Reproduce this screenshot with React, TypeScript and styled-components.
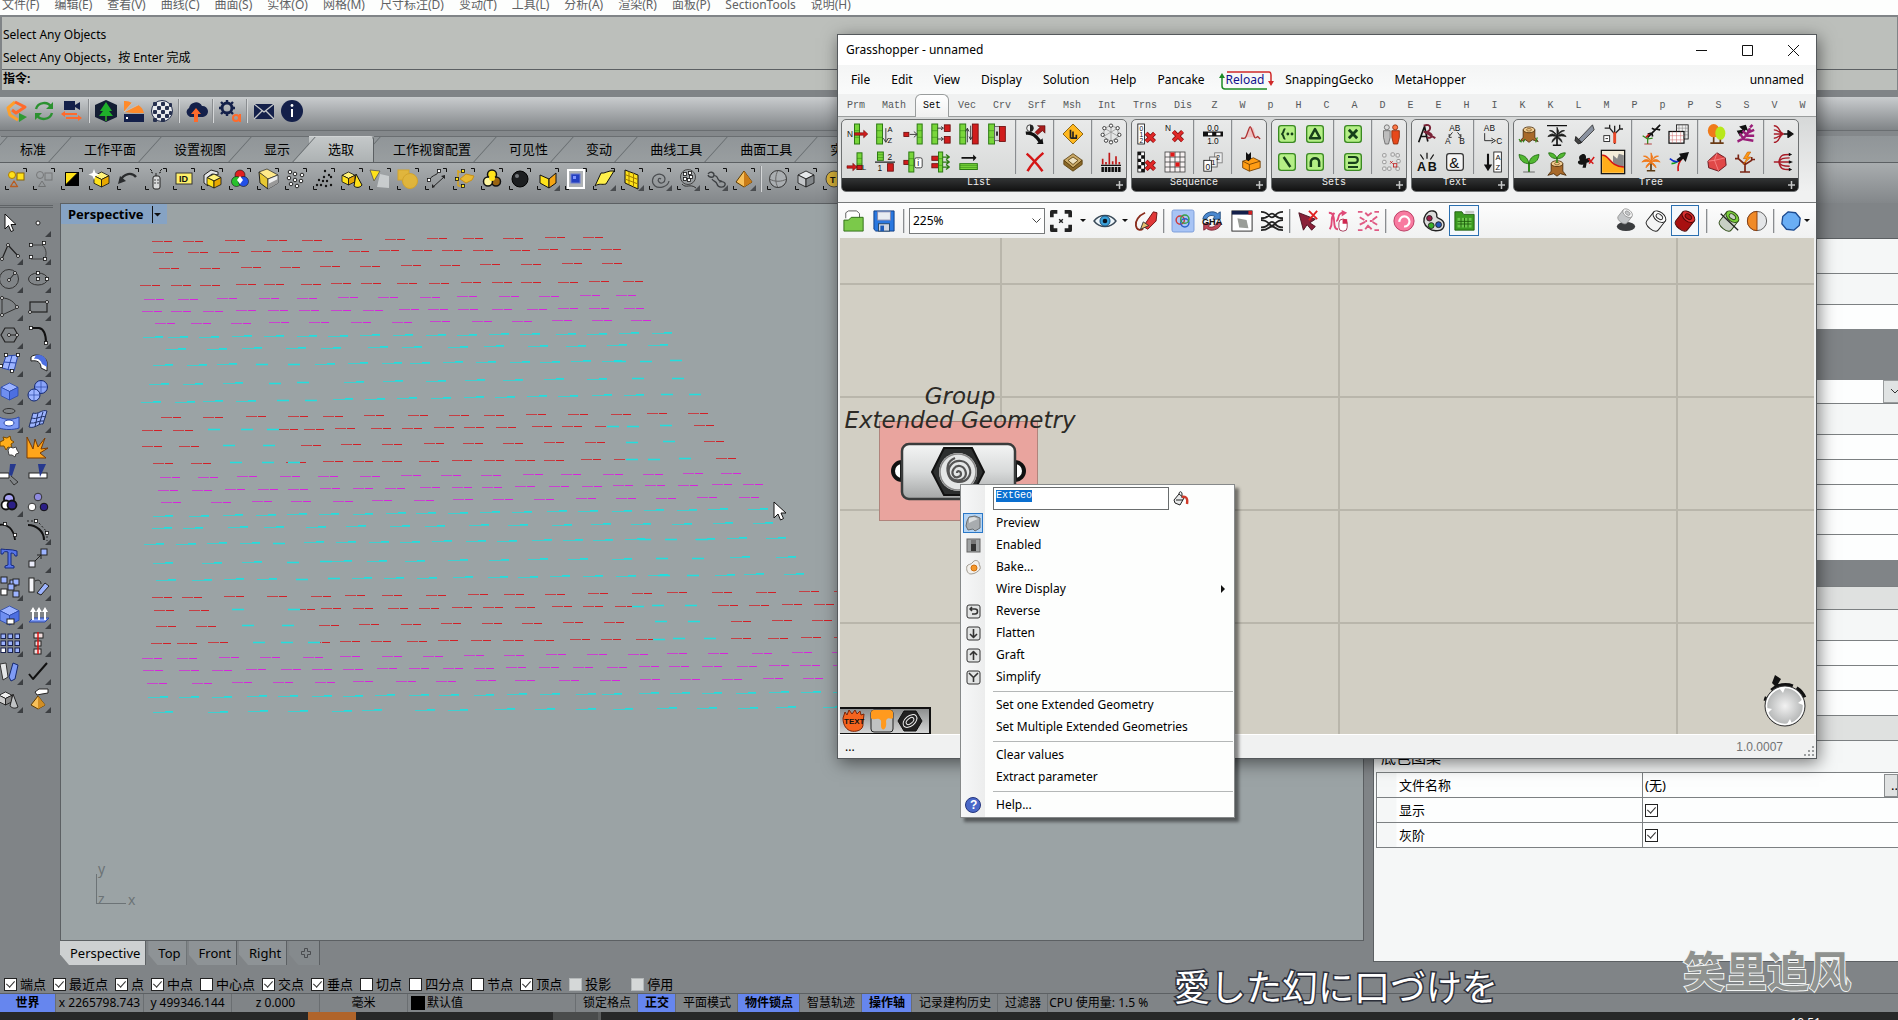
import React from 'react';
import styled, { createGlobalStyle, css } from 'styled-components';

const UI = '"Noto Sans", "Noto Sans CJK SC", sans-serif';
const MONO = '"Liberation Mono", "Noto Sans CJK SC", monospace';

const Global = createGlobalStyle`
  *, *::before, *::after { box-sizing: border-box; }
  body { margin: 0; font-family: ${UI}; font-size: 12px; color: #000; overflow: hidden; }
  button, input, select { font: inherit; color: inherit; margin: 0; padding: 0; border: 0; background: none; border-radius: 0; }
  svg { display: block; flex: none; overflow: visible; }
`;

/* ---------- drawing helpers ---------- */

type PProps = { d: string; f?: string; s?: string; w?: number; o?: number };
const P = ({ d, f = 'none', s = 'none', w = 1, o = 1 }: PProps) => (
  <path d={d} fill={f} stroke={s} strokeWidth={w} opacity={o} strokeLinejoin="round" />
);
type CProps = { x: number; y: number; r: number; f?: string; s?: string; w?: number };
const C = ({ x, y, r, f = 'none', s = 'none', w = 1 }: CProps) => (
  <circle cx={x} cy={y} r={r} fill={f} stroke={s} strokeWidth={w} />
);
type RProps = { x: number; y: number; w: number; h: number; f?: string; s?: string; r?: number; sw?: number };
const R = ({ x, y, w, h, f = 'none', s = 'none', r = 0, sw = 1 }: RProps) => (
  <rect x={x} y={y} width={w} height={h} rx={r} fill={f} stroke={s} strokeWidth={sw} />
);
type TProps = { x: number; y: number; z?: number; f?: string; b?: boolean; children: React.ReactNode };
const T = ({ x, y, z = 9, f = '#111', b = false, children }: TProps) => (
  <text x={x} y={y} fontSize={z} fill={f} fontWeight={b ? 700 : 400} fontFamily="Liberation Sans, Arial, sans-serif">{children}</text>
);
type BoxProps = { x: number; y: number; s: number; t: string; l: string; r: string; k?: string };
const Box = ({ x, y, s, t, l, r, k = '#111' }: BoxProps) => {
  const h = s / 2, q = s / 4;
  return (
    <g stroke={k} strokeWidth=".8" strokeLinejoin="round">
      <path d={`M${x} ${y + q}L${x + h} ${y}L${x + s} ${y + q}L${x + h} ${y + h}Z`} fill={t} />
      <path d={`M${x} ${y + q}L${x + h} ${y + h}V${y + s}L${x} ${y + s - q}Z`} fill={l} />
      <path d={`M${x + s} ${y + q}L${x + h} ${y + h}V${y + s}L${x + s} ${y + s - q}Z`} fill={r} />
    </g>
  );
};
const Dots = ({ pts, r, f, s = 'none' }: { pts: number[][]; r: number; f: string; s?: string }) => (
  <>{pts.map(([x, y]) => <C key={`${x}-${y}`} x={x} y={y} r={r} f={f} s={s} />)}</>
);
const Knots = ({ pts, f = '#fff', z = 3 }: { pts: number[][]; f?: string; z?: number }) => (
  <>{pts.map(([x, y]) => <R key={`${x}-${y}`} x={x - z / 2} y={y - z / 2} w={z} h={z} f={f} s="#111" sw={0.8} />)}</>
);
const Svg = ({ size, box = size, children }: { size: number; box?: number; children: React.ReactNode }) => (
  <svg width={size} height={size} viewBox={`0 0 ${box} ${box}`} aria-hidden="true">{children}</svg>
);

const Y = '#ffe21a';
const YD = '#e8a800';
const NAVY = '#14204a';
const OR = '#ff6a2b';

/* ---------- plugin bar icons (22 grid) ---------- */

const pluginIcons: (React.ReactNode | '|')[] = [
  <><P d="M10 2L3 8l2 7 8 5" s="#ffa02a" w={3} /><P d="M10 2l10 5-9 6-4-3" s={OR} w={3} /><P d="M14 13l8 4-8 5z" f="#2f9a35" /></>,
  <><P d="M3 9C5 2 15 1 18 7M19 13C17 20 7 21 4 15" s="#2b9130" w={2.4} /><P d="M20 2v7h-7zM2 20v-7h7z" f="#2b9130" /></>,
  <><R x={3} y={1} w={11} h={9} f={NAVY} /><P d="M14 5l5-3v8l-5-3z" f={NAVY} /><P d="M1 14h15M5 18h15" s={OR} w={2.2} /><P d="M0 14l4-3v6zM21 18l-4-3v6z" f={OR} /></>,
  '|',
  <><P d="M11 0L22 5V17L11 22L0 17V5Z" f="#131d33" /><P d="M11 2L17 11H14L18 16H4L8 11H5Z" f="#1fb02a" /><R x={10} y={16} w={2} h={5} f="#2b8a25" /></>,
  <><P d="M1 12V1A12 12 0 0 1 9 3L1 12L15 5A12 12 0 0 1 21 13H10Z" f="#ff8a2a" /><P d="M9 3L1 12M15 5L1 12" s="#c8c8c8" w={0.8} /><R x={1} y={14} w={20} h={8} f={NAVY} /><R x={3} y={17} w={2} h={2} f="#fff" /></>,
  <><C x={11} y={11} r={10.5} f="#e9ebee" s="#26304f" />{[2, 6, 10, 14, 18].map((yy, i) => [3, 11].map((xx) => <R key={`${yy}${xx}`} x={xx + (i % 2 ? 3 : -1)} y={yy} w={4} h={4} r={1} f="#26304f" />))}{[6, 14].map((yy) => <R key={yy} x={yy === 6 ? 18 : 18} y={yy - 3} w={3} h={4} r={1} f="#26304f" />)}</>,
  '|',
  <><P d="M5 17A5 5 0 0 1 4 8A7 7 0 0 1 17 6A5.500 5.500 0 0 1 18 17Z" f={NAVY} /><P d="M11 8l5 6h-3v8h-4v-8h-3z" f={OR} /></>,
  '|',
  <><C x={8} y={8} r={5} s={NAVY} w={3} /><P d="M8 0v3M8 13v3M0 8h3M13 8h3M2 2l3 3M11 11l3 3M14 2l-3 3M2 14l3-3" s={NAVY} w={2.4} /><C x={17} y={18} r={3} s={OR} w={2} /><P d="M21 14v8" s={OR} w={2} /></>,
  '|',
  <><R x={1} y={4} w={20} h={15} f={NAVY} /><P d="M1 4l10 8 10-8M1 19l8-8M21 19l-8-8" s="#c4c7c9" w={1.3} /></>,
  <><C x={11} y={11} r={11} f={NAVY} /><C x={11} y={5.5} r={1.4} f="#fff" /><P d="M11 9v8" s="#fff" w={2} /></>,
];

/* ---------- selection bar icons (22 grid) ---------- */

const selectIcons: (React.ReactNode | '|')[] = [
  <><C x={7} y={7} r={3.5} f={Y} s="#b07c00" /><R x={12} y={5} w={7} h={7} f={Y} s="#8a6400" /><P d="M9 13l3.500 5.500h-7z" s="#b85c20" w={1.3} /></>,
  <g opacity=".55"><C x={7} y={7} r={3.5} s="#555" /><R x={12} y={5} w={7} h={7} s="#555" /><P d="M9 13l3.500 5.500h-7z" s="#555" /></g>,
  <><R x={4} y={4} w={14} h={14} f="#000" /><P d="M4.500 17V4.500H17z" f={Y} s="#000" /></>,
  <><Box x={5} y={4} s={15} t="#fff27a" l={Y} r={YD} /><P d="M5 1l1.500 4 4 1.500-4 1.500-1.500 4-1.500-4-4-1.500 4-1.500z" f="#fff" /></>,
  <><P d="M3 13C7 5 15 4 19 9" s="#2a2c2e" w={2.4} /><P d="M1 16l2-8 6 5z" f="#2a2c2e" /></>,
  <><R x={8} y={8} w={7} h={13} r={2} f="#d8dadb" s="#222" /><P d="M11 8V5M7 3l-2-2M15 3l2-2M8 5l-2-1M14 5l2-1" s="#222" /><Dots pts={[[10, 12], [13, 12], [10, 15], [13, 15]]} r={0.8} f="#333" /></>,
  <><R x={3} y={5} w={16} h={11} f="#fff06a" s="#333" /><T x={6} y={14} z={9} b>ID</T></>,
  <><P d="M3 7l7-5 7 2v3l-6-1-4 3v9l-4-3z" f="#e4e6e7" s="#222" /><Box x={6} y={6} s={14} t="#fff27a" l={Y} r={YD} /></>,
  <><C x={11} y={7} r={5} f="#e21f1f" s="#111" w={0.6} /><C x={7.5} y={13.5} r={5} f="#28c12c" s="#111" w={0.6} /><C x={14.5} y={13.5} r={5} f="#2350e8" s="#111" w={0.6} /><P d="M11 8l3 4-3 4-3-4z" f="#fff" /></>,
  <><P d="M2 4l9 6v11l-8-6z" f="#e8c832" s="#222" /><P d="M2 4l8-3 11 6-10 4z" f="#ffe98a" s="#222" w={0.7} /><P d="M11 11l10-4v8l-10 6z" f="#eee" s="#222" w={0.7} /><P d="M11 16l10-5v4l-10 6z" f="#999" /></>,
  <Dots pts={[[5, 4], [10, 6], [17, 7], [4, 10], [10, 12], [6, 16], [12, 18], [16, 13]]} r={1.8} f="#fff" s="#222" />,
  <Dots pts={[[12, 3], [16, 7], [11, 9], [18, 9], [6, 12], [10, 13], [14, 13], [4, 17], [8, 17], [13, 18], [18, 17]]} r={1.2} f="#111" />,
  <><Box x={1} y={4} s={13} t="#fff27a" l={Y} r={YD} /><P d="M15 6l6 11c-2 3-6 3-8 1z" f={Y} s="#111" /></>,
  <><P d="M11 6l9 2v12l-12-1z" f="#d5d8da" o={0.8} /><P d="M1 2l10 1-6 10z" f={Y} s="#555" w={0.8} /></>,
  <g fill="#e8b832" stroke="#d9a520" opacity=".9"><rect x="1" y="2" width="11" height="10" /><circle cx="13" cy="13" r="7.500" /></g>,
  <><P d="M4 12C8 6 12 8 14 3M8 19l11-10" s="#222" /><P d="M20 7v4l-4-3zM7 20v-4l3 3z" f="#222" /><Knots pts={[[4, 12], [14, 3]]} /></>,
  <><P d="M5 2v16M5 4h7M5 18h5" s="#d9a520" w={1.5} /><Knots pts={[[10, 3], [10, 18], [4, 11]]} f={Y} /><P d="M7 11l6-5 8 2-2 4-6 3z" f="#e8b832" s="#c8901a" /></>,
  <><C x={11} y={6.5} r={4.5} f={Y} s="#111" w={1.5} /><C x={15} y={13.5} r={4.5} f="#9a6412" s="#111" w={1.5} /><C x={7} y={13.5} r={4.5} f="#fff7a0" s="#111" w={1.5} /><C x={11} y={10} r={3} f={Y} /></>,
  <><C x={11} y={11} r={8} f="#1c1e20" s="#000" /><C x={8} y={8} r={2} f="#74787b" /></>,
  <><P d="M3 7l9 4v9l-9-5z" f={Y} s="#111" /><P d="M12 11l7-6v10l-7 5z" f="#f5a514" s="#111" /></>,
  <><R x={3} y={2} w={16} h={18} f="#aeb2b5" s="#fff" sw={2} /><R x={6} y={6} w={9} h={9} f="#2440c0" s="#6a7ad0" /><R x={8} y={8} w={3} h={3} f="#7e94ff" /></>,
  <P d="M8 5c4 1 7-3 13-2l-8 13c-4 1-7-1-11 2z" f="#fff04a" s="#111" />,
  <><P d="M4 2l13 5v14l-13-6z" f={Y} s="#111" /><P d="M8 3.500v13M12.500 5v14M4 6.500l13 5M4 11l13 5" s="#a07c00" /></>,
  <P d="M12 11c-2-2-4 1-2 3s6 1 6-3-5-6-9-4-5 8-1 11 13 1 14-5" s="#4a4d50" w={1.2} />,
  <><C x={11} y={9} r={7.5} s="#444" /><Knots pts={[[8, 6], [13, 5], [14, 9], [8, 11], [12, 12]]} /><P d="M5 16c4 5 8-1 14 4" s="#333" /></>,
  <P d="M3 6c2-3 6-2 6 1s-5 3-6 0M8 8c2-1 4 0 5 3s4 1 4 3M7 11c2 3 4 2 5 5 1 4 7 4 8 1s-3-4-6-3" s="#3c3f42" w={1.3} />,
  <><P d="M11 3l8 11-8 5-8-5z" f="#f7c05a" s="#5c3a00" /><P d="M11 3v16l8-5z" f="#c97b17" /></>,
  '|',
  <><C x={11} y={11} r={8.5} f="#aaaeb1" s="#333" /><P d="M2.500 11c5 3 12 3 17 0M11 2.500c-3 5-3 12 0 17" s="#666" /></>,
  <Box x={3} y={3} s={16} t="#e4e7e9" l="#c2c5c8" r="#83878a" />,
  <><C x={11} y={11} r={8} f="#d8b23a" s="#444" /><T x={7} y={15} b>T</T></>,
];
const flyouts = new Set([19, 21, 22, 23, 24, 25, 26]);

/* ---------- side bar icons (22 grid) ---------- */

const B1 = '#9db4ff', B2 = '#4d6fe0', B3 = '#2a47a8';
const sideIcons: React.ReactNode[] = [
  <P d="M6 2v15l3.500-3.500 2.500 6 2.500-1-2.500-6h5z" f="#fff" s="#111" />,
  <C x={11} y={11} r={2} f="#fff" s="#222" />,
  <><P d="M3 19L9 5L19 16" s="#222" w={1.2} /><Dots pts={[[3, 19], [9, 5], [19, 16]]} r={1.5} f="#fff" s="#222" /></>,
  <><P d="M3 5h12c5 3 5 12 2 14H4" s="#444" /><Knots pts={[[4, 5], [17, 3], [4, 17], [18, 19]]} /></>,
  <><C x={10} y={11} r={9.5} s="#333" /><P d="M10 12l6-7" s="#222" /><Dots pts={[[10, 12], [16, 5]]} r={1.5} f="#fff" s="#222" /></>,
  <><ellipse cx="11" cy="11" rx="9.500" ry="6" fill="none" stroke="#333" /><Knots pts={[[11, 5], [11, 11], [20, 11]]} /></>,
  <><P d="M3 2v17L18 12C16 6 10 2 3 2" s="#333" /><Dots pts={[[3, 2], [3, 19], [18, 11]]} r={1.5} f="#fff" s="#222" /></>,
  <><R x={3} y={6} w={17} h={10} s="#222" sw={1.2} /><Dots pts={[[3, 16], [20, 6]]} r={1.5} f="#fff" s="#222" /></>,
  <><P d="M6 4h9l4 7-4 7H6l-4-7z" s="#222" w={1.2} /><P d="M10 11h8" s="#222" /><Dots pts={[[10, 11], [18, 11]]} r={1.5} f="#fff" s="#222" /></>,
  <><P d="M4 4h8c5 1 7 6 7 15" s="#111" w={2} /><Knots pts={[[4, 4], [19, 19]]} /></>,
  <><P d="M7 4l12-1-4 16-12-3z" f={B1} s={B3} /><P d="M13 3.500l-4 14M5 10l12 1" s={B3} /><Knots pts={[[7, 3], [19, 3], [2, 14], [13, 19]]} /></>,
  <><P d="M4 5c4-4 14-2 16 5v9l-6-3c0-6-4-8-10-7z" f="#fff" s="#222" /><P d="M9 3c6-1 10 2 11 8v4l-5-3c-1-4-4-6-8-5z" f={B2} /></>,
  <Box x={2} y={3} s={17} t={B1} l="#6f8ff0" r={B2} k={B3} />,
  <><C x={14} y={7} r={6.5} f="#8aa4fa" s="#14286e" /><C x={7} y={15} r={6} f={B1} s="#14286e" /><P d="M14 1v13M7 9v12M1 15h12M8 7h12" s={B3} w={0.7} /></>,
  <><ellipse cx="10" cy="3" rx="6" ry="2.500" fill="none" stroke="#333" /><P d="M0 9c6 3 14 3 20 0v11c-6 2-14 2-20 0z" f="#7f9bf5" s={B3} /><ellipse cx="10" cy="15" rx="5" ry="3" fill="#fff" stroke={B3} /></>,
  <><P d="M6 5c5 2 9-4 14-2l-4 13c-4-1-8 5-14 3z" f={B1} s="#1e2f66" /><P d="M11 5l-3 14M16 4l-4 13M5 10c5 2 9-3 14-1M3 15c5 1 9-3 14-2" s="#1e2f66" /></>,
  <><P d="M1 6l4-2-1-3 4 1 3-2 1 4 3 2-3 2 1 4-4-1-2 3-2-4-4 0z" f="#ffae1a" s="#7a4a00" /><P d="M9 14l2-3 3 1 3-1 1 3 2 3-3 1-1 3-3-2-3 0z" f="#fff" s="#444" /></>,
  <P d="M0 1l6 12 2-10 3 8 7-9-4 11 7-1-8 5 6 5H0z" f="#ffa51a" s="#7a3a00" />,
  <><P d="M0 9h10v5H0z" f="#fff" s="#222" /><P d="M11 0h6l-4 12-3-1z" f="#26398e" /><P d="M12 12l7 6-4 3-4-5" s="#333" /></>,
  <><R x={2} y={9} w={18} h={5} f="#fff" s="#222" /><P d="M11 0h8l-6 13z" f="#26398e" /></>,
  <><C x={10} y={7} r={5} f="#a9a4f5" s="#111" w={1.8} /><C x={7} y={13} r={4.5} f="#fff" s="#111" w={1.8} /><C x={13} y={13} r={4.5} f="#2b1f86" s="#111" w={1.8} /></>,
  <><C x={11} y={5} r={3.8} f="#8f8be0" s="#333" /><C x={5} y={15} r={3.8} f="#fff" s="#333" /><C x={17} y={15} r={3.8} f="#2b1f86" s="#111" /></>,
  <><P d="M0 5c8-2 15 4 16 15" s="#111" w={1.8} /><Knots pts={[[6, 4], [16, 15]]} /></>,
  <><P d="M1 5c8 0 16 6 16 15" s="#111" w={2} /><path d="M0 1h8M12 3l8 9v9" stroke="#222" strokeDasharray="2 2" fill="none" /><Knots pts={[[9, 1], [20, 13]]} /></>,
  <P d="M2 1c6 1 10 0 16 2l0 5-2 0c0-2-2-3-4-3v12l3 1v2H6v-2l3-1V4c-3-1-5 0-5 2H2z" f="#5674e8" s="#152a80" />,
  <><P d="M7 14l7-7M14 7h-4M14 7v4" s="#222" /><R x={2} y={13} w={6} h={6} f="#e8eaf8" s="#222" /><R x={14} y={1} w={6} h={6} f={B1} s="#222" /></>,
  <>{[[2, 1], [11, 4], [14, 3], [2, 13], [14, 15], [9, 8]].map(([x, y], i) => <R key={i} x={x} y={y} w={6} h={6} f={i === 3 ? '#fff' : B1} s="#222" />)}</>,
  <><R x={2} y={2} w={5} h={14} f="#f4f5f8" s="#222" /><P d="M8 5c4-2 6 0 6 3" s="#222" /><P d="M10 17l8-10 4 3-8 9z" f={B1} s="#222" /></>,
  <><Box x={1} y={2} s={19} t={B1} l="#6f8ff0" r={B2} k={B3} /><R x={8} y={15} w={7} h={5} f="#fff" s="#222" /></>,
  <><P d="M2 18l4-4h16l-4 4z" f="#7f9bf5" s={B3} /><P d="M6 16V7M12 16V7M18 16V7" s="#fff" w={2} /><P d="M3 8l3-5 3 5zM9 8l3-5 3 5zM15 8l3-5 3 5z" f="#fff" /></>,
  <>{[2, 9, 16].map((x) => [2, 9, 16].map((y) => <R key={`${x}${y}`} x={x} y={y} w={4.5} h={4.5} f={y === 16 && x === 2 ? '#fff' : B1} s="#1a2350" />))}</>,
  <><R x={7} y={1} w={9} h={5} f="#f2dede" s="#222" /><R x={8} y={9} w={6} h={5} f="#f2dede" s="#222" /><R x={7} y={17} w={7} h={5} f="#f2dede" s="#222" /><P d="M11 0v22" s="#d11" w={1.5} /></>,
  <><P d="M1 4l6-1 2 14-5 3z" f="#e4e6e7" s="#333" /><P d="M10 17L14 3l5 2-3 14-4 2z" f="#7f9bf5" s="#14286e" /></>,
  <P d="M2 14l4 5L20 3" s="#111" w={2} />,
  <><Box x={0} y={4} s={13} t="#eee" l="#ccc" r="#888" /><P d="M14 6l5 13c-3 2-6 1-8-1z" f="#bfc2c4" s="#222" /></>,
  <><P d="M11 8l7 9-7 4-7-4z" f="#f7c05a" s="#5c3a00" /><P d="M11 8v13l7-4z" f="#d18e24" /><P d="M8 4l4-3h9v4l-6 1-5 1z" f="#fff" s="#222" /></>,
];
const noFlyout = new Set([0, 16, 17, 18, 19, 21, 22, 24]);

/* ---------- ribbon icons (24 grid) ---------- */

const GreenBar = ({ x, y = 0, w = 6, h = 24 }: { x: number; y?: number; w?: number; h?: number }) => (
  <><R x={x} y={y} w={w} h={h} f="#79d63a" s="#2c7a12" sw={1.2} /><P d={`M${x} ${y + h / 3}h${w}M${x} ${y + (2 * h) / 3}h${w}`} s="#2c7a12" w={0.6} /></>
);
const RED = '#d01c1c';
const Arrow = ({ x, y, l = 10, f = RED, s = '#6b0c0c' }: { x: number; y: number; l?: number; f?: string; s?: string }) => (
  <P d={`M${x} ${y - 1.5}h${l - 4}v-3l5 4.500-5 4.500v-3h-${l - 4}z`} f={f} s={s} w={0.7} />
);
const RedX = ({ x, y, z }: { x: number; y: number; z: number }) => (
  <><P d={`M${x} ${y}l${z} ${z}M${x + z} ${y}l-${z} ${z}`} s="#7a0c0c" w={5} /><P d={`M${x} ${y}l${z} ${z}M${x + z} ${y}l-${z} ${z}`} s="#e02828" w={3.4} /></>
);
const SetTile = ({ children }: { children: React.ReactNode }) => (
  <><R x={2} y={2} w={20} h={20} r={3} f="#b5ef86" s="#3b8a22" sw={1.6} />{children}</>
);
const Palm = ({ c, t = '#5a3a14' }: { c: string; t?: string }) => (
  <><P d="M12 12v10M7 22.500h10" s={t} w={2} /><P d="M12 12C8 8 5 8 1 12c4-1 7-1 11 0zM12 12c4-4 7-4 11 0-4-1-7-1-11 0zM12 11C9 6 6 4 3 5c4 1 6 3 9 6zM12 11c3-5 6-7 9-6-4 1-6 3-9 6zM12 11V1l2 5zM12 12c-3 1-6 4-6 7l6-6zM12 12c3 1 6 4 6 7l-6-6z" f={c} s={c} w={1} /></>
);
const Stump = ({ y = 8 }: { y?: number }) => (
  <><P d={`M5 ${y}v9l-4 5 7-2 4 3 4-3 7 2-4-5v-9z`} f="#a8692a" s="#4a2a08" /><ellipse cx="12" cy={y} rx="7" ry="3.500" fill="#f1cf94" stroke="#4a2a08" /><ellipse cx="12" cy={y} rx="3" ry="1.500" fill="none" stroke="#8a5a20" /></>
);

type Section = [React.ReactNode, React.ReactNode][];
const ribbon: { name: string; sections: Section[] }[] = [
  {
    name: 'List',
    sections: [
      [
        [<><GreenBar x={9} /><T x={0} y={16} z={10}>N</T><Arrow x={9} y={12} l={15} /></>, <><GreenBar x={12} h={20} y={1} /><Arrow x={0} y={18} l={11} /><R x={12} y={16} w={6} h={5} f={RED} s="#6b0c0c" /><T x={18} y={22}>L</T></>],
        [<><GreenBar x={2} w={7} /><P d="M13 5v16M10 17l3 5 3-5" s="#222" /><T x={15} y={9}>A</T><T x={15} y={23}>Z</T></>, <><GreenBar x={3} w={7} h={10} /><P d="M0 12h24" s="#222" w={1.5} /><R x={15} y={14} w={7} h={9} f={RED} s="#6b0c0c" /><T x={15} y={9} z={10}>2</T><T x={3} y={23} z={10}>1</T></>],
        [<><GreenBar x={17} /><R x={1} y={10} w={6} h={5} f={RED} s="#6b0c0c" /><P d="M8 12.500h8M13 9l4 3.500-4 3.500" s="#222" /></>, <><R x={1} y={10} w={6} h={5} f={RED} s="#6b0c0c" /><GreenBar x={7} /><R x={14} y={7} w={9} h={12} r={2} f="#fff" s="#222" /><T x={17} y={17} z={10}>i</T></>],
        [<><GreenBar x={1} w={7} /><R x={16} y={1} w={7} h={8} f={RED} s="#6b0c0c" /><R x={16} y={15} w={7} h={8} f={RED} s="#6b0c0c" /><P d="M8 5h6M8 18h6M12 3l3 2-3 2M12 16l3 2-3 2" s="#222" /></>, <><R x={1} y={5} w={8} h={5} f={RED} s="#6b0c0c" /><R x={1} y={14} w={8} h={5} f={RED} s="#6b0c0c" /><GreenBar x={9} w={5} /><P d="M14 6h7M14 12h7M14 18h7M18 3l4 3-4 3M18 9l4 3-4 3M18 15l4 3-4 3" s="#2c7a12" w={1.5} /></>],
        [<><GreenBar x={1} w={7} /><R x={16} y={0} w={7} h={24} f={RED} s="#6b0c0c" /><P d="M10 22V6M14 2v16M8 9l2-4 2 4M12 15l2 4 2-4" s="#222" /></>, <><P d="M3 6h14v-3l4 4-4 4v-3H3z" f="#111" /><GreenBar x={1} y={14} w={21} h={7} /></>],
        [<><GreenBar x={2} w={7} /><R x={9} y={3} w={6} h={17} f="#d7d7d7" s="#555" /><R x={15} y={3} w={7} h={18} f={RED} s="#6b0c0c" /><P d="M12 9v5" s="#111" w={2} /></>, null],
      ],
      [[<><C x={6} y={5} r={4} f="#eee" s="#222" /><P d="M6 1a4 4 0 0 1 0 8z" f="#222" /><P d="M1 11c8-1 12 3 17 10" s="#111" w={4} /><P d="M22 24h-8l7-7z" f="#111" /><P d="M12 10l6-6-3-2h9v9l-3-3-6 5z" f="#a81c1c" s="#4a0808" w={0.7} /></>, <P d="M2 2C9 8 15 15 21 23M22 1C15 7 8 14 3 23" s="#d41616" w={3} />]],
      [[<><P d="M12 0l12 12-12 12L0 12z" f="#ffb81f" s="#7a5200" /><P d="M9 7v10M9 17h7v-4M12 9v8" s="#222" w={2} /></>, <><P d="M1 10l11-8 11 8-11 9z" f="#c9a968" s="#5a3f0c" /><P d="M1 10v5l11 8 11-8v-5l-11 9z" f="#8a6828" s="#5a3f0c" /><P d="M6 10l6-4 6 4-6 5z" f="#ece0bf" s="#5a3f0c" /></>]],
      [[<><P d="M12 2L4 5L3 15L12 21L21 15L20 5Z M12 2V21M4 5L21 15M20 5L3 15" s="#999" /><Dots pts={[[12, 2], [4, 5], [20, 5], [2, 13], [22, 13], [6, 20], [18, 20], [12, 22]]} r={2} f="#fff" s="#222" /></>, <><P d="M2 15V8M6 15v-3M10 15V1M14 15v-4M18 15V5M22 15v-3" s="#c01818" w={2} /><P d="M0 16h24" s="#111" w={1.5} /><P d="M2 18v6M6 18v6M10 18v6M14 18v6M18 18v6M22 18v6" s="#111" w={3} /></>]],
    ],
  },
  {
    name: 'Sequence',
    sections: [
      [
        [<><R x={1} y={0} w={8} h={24} f="#fff" s="#111" /><T x={3} y={8} z={8}>0</T><T x={3} y={16} z={8}>1</T><T x={3} y={23} z={8}>2</T><RedX x={11} y={11} z={10} /></>, <><R x={1} y={0} w={8} h={24} f="#fff" s="#111" /><P d="M1 0h4v4h-4zM5 4h4v4h-4zM1 8h4v4h-4zM5 12h4v4h-4zM1 16h4v4h-4zM5 20h4v4h-4z" f="#111" /><RedX x={11} y={11} z={10} /></>],
        [<><T x={0} y={8} z={10}>N</T><RedX x={10} y={9} z={11} /></>, <><R x={0} y={0} w={24} h={24} f="#f7f2f2" s="#444" /><P d="M6 0v24M12 0v24M18 0v24M0 6h24M0 12h24M0 18h24" s="#444" /><R x={6.5} y={0.5} w={5} h={5} f="#e01818" /><R x={12.5} y={12.5} w={5} h={5} f="#e01818" /></>],
      ],
      [[<><T x={5} y={8} z={10}>0.0</T><R x={0} y={9} w={24} h={6} f="#111" /><P d="M6 10.500h5v3H6zM16 10.500h5v3h-5z" f="#fff" /><T x={5} y={24} z={10}>1.0</T></>, <><R x={14} y={1} w={9} h={12} f="#eee" s="#777" /><R x={8} y={6} w={9} h={12} f="#eee" s="#555" /><R x={1} y={10} w={9} h={13} f="#fff" s="#111" /><T x={3} y={21} z={10}>0</T><T x={10} y={16} z={9}>1</T><T x={16} y={10} z={8}>2</T></>]],
      [[<><P d="M7 16l4-13 4 2 3 11z" f="#eec2c2" /><P d="M0 17c5 0 5 2 8-7s3-9 6 0 3 7 6 5l3 3" s="#b03434" w={1.6} /></>, <><P d="M2 11l13-4 8 4v8l-13 4-8-4z" f="#ff9d14" s="#6a3a00" /><P d="M2 11l8 4 13-4M10 15v8" s="#6a3a00" /><P d="M6 0l3 3 3-3v8l-3 3-3-2z" f="#111" /></>]],
    ],
  },
  {
    name: 'Sets',
    sections: [
      [
        [<SetTile><P d="M10 6c-3 0-1 4-4 6 3 2 1 6 4 6" s="#17401a" w={2.4} /><Dots pts={[[13, 12], [18, 12]]} r={1.7} f="#17401a" /></SetTile>, <SetTile><P d="M8 6l8 12" s="#17401a" w={3} /></SetTile>],
        [<SetTile><P d="M12 6l6 11H6z" s="#17401a" w={3} /></SetTile>, <SetTile><P d="M7 18v-6c0-6 10-6 10 0v6" s="#17401a" w={3} /></SetTile>],
      ],
      [[<SetTile><P d="M7 7l10 10M17 7L7 17" s="#17401a" w={3.4} /></SetTile>, <SetTile><P d="M6 6h8c5 0 5 7 0 7H6M6 18h12" s="#17401a" w={2.6} /></SetTile>]],
      [[<><C x={7} y={4} r={3} f="#ddd" s="#666" /><P d="M3 8h8v8l-2 8H5l-2-8z" f="#bdbdbd" s="#666" /><C x={17} y={4} r={3} f="#ff7a4a" s="#8a2a08" /><P d="M13 8h9v8l-2 8h-5l-2-8z" f="#e8491a" s="#8a2a08" /></>, <>{[[2, 2], [12, 1], [18, 2], [2, 10], [19, 9], [2, 18], [8, 18], [18, 18]].map(([x, y]) => <R key={`${x}${y}`} x={x} y={y} w={4} h={4} r={1} f="#eee" s="#888" />)}<P d="M11 11l3 3M14 11l-3 3" s="#c01818" /><R x={15} y={14} w={4} h={4} s="#c01818" /></>]],
    ],
  },
  {
    name: 'Text',
    sections: [
      [
        [<><P d="M2 22L9 3l4 18M4 15h8" s="#111" w={2} /><P d="M8 2c10-4 10 7 2 8 12 0 8 9 2 6M8 9l14 8" s="#7a2438" w={2.4} /></>, <><T x={0} y={23} z={15} b>A</T><T x={13} y={23} z={15} b>B</T><P d="M12 8V1M8 9L4 3M16 9l4-6" s="#111" w={1.5} /></>],
        [<><T x={5} y={8} z={10}>AB</T><T x={0} y={24} z={10}>A</T><T x={17} y={24} z={10}>B</T><P d="M9 10l-4 5M15 10l4 5M5 12v4h3M19 12v4h-3" s="#111" /></>, <><R x={2} y={2} w={20} h={20} r={3} f="#f4f4f4" s="#333" sw={1.5} /><T x={5} y={19} z={18}>&amp;</T></>],
      ],
      [[<><T x={1} y={8} z={10}>AB</T><P d="M2 11v9h10M10 17l5 3-5 3" s="#111" /><T x={16} y={24} z={10}>C</T></>, <><P d="M6 2v15" s="#111" w={2.5} /><P d="M1 15h10l-5 8z" f="#111" /><R x={13} y={0} w={9} h={24} f="#fff" s="#111" /><T x={15} y={10} z={9}>A</T><T x={15} y={22} z={9}>Z</T></>]],
    ],
  },
  {
    name: 'Tree',
    sections: [
      [
        [<><Stump y={7} /><P d="M0 18l3 4M22 16l-2 6M5 22l2-4" s="#2f8a1a" w={1.5} /></>, <><P d="M12 12v12" s="#2f8a1a" w={2.4} /><P d="M12 14C10 5 5 4 0 3c1 8 6 11 12 11zM12 14c1-8 6-10 12-11-1 8-5 11-12 11z" f="#52b832" s="#1f6a10" /><P d="M5 24h14" s="#555" /></>],
        [<><P d="M0 2h24" s="#111" w={1.5} /><g transform="translate(0 3)"><Palm c="#1a1c1a" t="#111" /></g></>, <><Stump y={14} /><P d="M12 13V6" s="#2f8a1a" w={2} /><P d="M12 8C10 2 6 1 2 1c1 5 5 7 10 7zM12 8c1-5 5-7 10-7-1 5-5 7-10 7z" f="#52b832" s="#1f6a10" /></>],
        [<><P d="M3 20L21 1l2 6L7 23z" f="#8a92a0" s="#333" /><P d="M1 15l7 7-4 2-4-4z" f="#444" s="#111" /></>, <><P d="M8 3c4-2 6 2 5 5l4-1c3 2 1 6-3 6l-1 6H9l1-4C4 17 1 11 6 10c-2-3-1-6 2-7z" f="#141414" /><P d="M16 8l6 6M23 6l-6 8" s="#d41616" w={1.8} /></>],
        [<><P d="M14 24V8M14 12L8 5V1M14 12l6-6V1M8 5H2M20 6h4M14 8V2" s="#222" w={1.6} /><P d="M14 23V10" s="#e84a2a" w={3.5} /><R x={1} y={14} w={7} h={7} f="#fff" s="#111" /><P d="M3 17.500h3" s="#111" /></>, <><R x={-2} y={-2} w={28} h={28} f="#f4ecd8" s="#111" sw={1.5} /><P d="M12 12l0-8 5 4 2-6 6 2v17l-8-2z" f="#888" /><P d="M-1 4c8-2 9 14 26 14v7H-1z" f="#ffae1a" /><P d="M-1 4c8-2 9 14 26 14" s="#d41616" w={2} /></>],
      ],
      [
        [<><P d="M8 16L23 1M13 11l-5 1M17 7l-4-2M13 11l1 4M18 6l5 1" s="#111" w={2} /><P d="M8 16v8M8 18l-6-4M8 18l6-1" s="#2f8a1a" w={1.5} /><P d="M6 16l4-4" s="#c01818" w={2} /><P d="M4 24h9" s="#a22" /></>, <Palm c="#f07a1a" t="#5a3a14" />],
        [<><R x={9} y={1} w={14} h={17} f="#f0f0f0" s="#111" /><P d="M12 1v17M16 1v17M20 1v17M9 5h14M9 9h14M9 13h14" s="#777" w={0.6} /><R x={0} y={9} w={18} h={14} f="#fff" s="#111" sw={1.5} /><P d="M4 9v14M9 9v14M14 9v14M0 14h18M0 19h18" s="#c66" w={0.6} /></>, <><P d="M3 14C8 14 11 12 17 6" s="#14a014" w={2} /><P d="M1 8C8 14 11 12 17 6" s="#1430d0" w={2} /><P d="M11 23C10 16 12 12 17 6" s="#d41616" w={2} /><P d="M12 2l12-2-4 12-3-4-5 4-3-3 5-4z" f="#111" /></>],
      ],
      [
        [<><P d="M8 12v11M16 15v8M4 23h16" s="#6a3a14" w={2} /><ellipse cx="8" cy="8" rx="7" ry="8" fill="#f07a1a" /><ellipse cx="16" cy="11" rx="6" ry="8" fill="#b8e81a" /></>, <><P d="M12 1l10 6 1 9-9 7-12-4-1-8z" f="#e04848" s="#5a0c14" /><P d="M12 1l-3 9 5 13M9 10l-8 1M9 10l13-3" s="#ff9a9a" w={0.8} /></>],
        [<><P d="M2 8l7-1-4-4 8-2 3 8-3-2-7 8z" f="#111" /><P d="M3 21C12 18 15 12 18 5M10 18l-4-7M14 13l-5-5M10 18l12 2M14 14l9 0M16 10l7-3M18 4l3-3" s="#9a1e78" w={3} /></>, <><P d="M12 24V12M12 15L4 8V3M12 15l8-5V6M4 8H0M20 9h4M6 24h12" s="#7a2414" w={2} /><P d="M15 0l-5 8h4l-4 7 9-9h-4l4-6z" f="#ff9a14" s="#c05a00" w={0.7} /></>],
      ],
      [[<><P d="M1 2c8 0 6 10 12 10M1 12h12M1 22c8 0 6-10 12-10M1 7c6 0 7 5 12 5M1 17c6 0 7-5 12-5" s="#a81c28" w={1.7} /><P d="M13 12h8M18 8l6 4-6 4z" s="#111" f="#111" w={1.7} /></>, <><P d="M1 12h6M7 12C9 3 12 3 20 3M7 12c2 9 5 9 13 9M7 12c2-4 5-5 13-5M7 12c2 4 5 5 13 5M7 12h14" s="#a81c28" w={1.7} /><P d="M19 1l4 2-4 2zM19 10l5 2-5 2zM19 19l4 2-4 2z" f="#111" /></>]],
    ],
  },
];

/* ---------- canvas bar icons (24 grid) ---------- */

const Tube = ({ a, b, k = '#222' }: { a: string; b: string; k?: string }) => (
  <g transform="rotate(38 12 12)" stroke={k} strokeWidth="1"><path d="M4 6v12c0 6 16 6 16 0V6z" fill={b} /><ellipse cx="12" cy="6" rx="8" ry="5" fill={a} /><ellipse cx="12" cy="6" rx="4" ry="2.500" fill={b} /></g>
);
const ic = {
  open: <><P d="M3 9V3l3-2h9l3 3v8" f="#fff" s="#555" /><P d="M1 11h5l3-3h13v15H1z" f="#7bc94a" s="#2c6a14" /></>,
  save: <><P d="M1 1h22v22H3l-2-2z" f="#2a78e0" s="#0c3a80" /><R x={5} y={2} w={14} h={9} f="#e8ecf2" s="#88a" /><R x={6} y={15} w={12} h={8} f="#cfd6e2" s="#246" /><R x={8} y={17} w={4} h={6} f="#1c5ab8" /></>,
  zoom: <><P d="M2 8V2h6M16 2h6v6M22 16v6h-6M8 22H2v-6" s="#222" w={4} /><P d="M10 10l4 4M14 10l-4 4" s="#222" w={1.5} /></>,
  eye: <><P d="M0 12C6 4 18 4 24 12 18 20 6 20 0 12z" f="#eef6fb" s="#3a4a58" w={1.6} /><C x={12} y={12} r={5.5} f="#3aa0d8" s="#134a78" /><C x={12} y={12} r={2.5} f="#0a1420" /></>,
  pen: <><P d="M9 18L20 2l4 1-1 9-9 9z" f="#e03838" s="#6a1010" /><P d="M11 3C4 6 0 12 1 17s5 6 8 3" s="#8a2c1c" w={2} /><P d="M6 21l3-8 6 4z" f="#e8c070" s="#333" /></>,
  finder: <><R x={0} y={0} w={24} h={24} r={2} f="#a8c4f5" s="#7a9ad8" /><C x={9} y={11} r={4.5} s="#d03838" w={1.6} /><C x={14} y={14} r={4.5} s="#2860c8" w={1.6} /><C x={14} y={10} r={4.5} s="#38a048" w={1.6} /></>,
  gha: <><P d="M2 10C3 2 14 0 18 4l3-2v8h-8l2-3C11 5 8 6 6 10z" f="#4a88d0" s="#28507f" /><P d="M22 14c-1 8-12 10-16 6l-3 2v-7h7l-2 3c4 2 8 0 9-4z" f="#c04858" s="#7a2030" /><T x={1} y={16} z={10} b>GHA</T></>,
  win: <><R x={1} y={1} w={22} h={22} f="#fff" s="#222" /><R x={1} y={1} w={22} h={4} f={NAVY} /><R x={19} y={1} w={4} h={4} f="#d02020" /><P d="M7 9l10 2 2 9-10-1z" f="#9a9d98" /></>,
  weave: <><P d="M0 2c9 0 8 6 12 6s3-6 12-6M0 9c9 0 8-5 12-5s3 5 12 5M0 11c9 0 8 6 12 6s3-6 12-6M0 19c9 0 8-6 12-6s3 6 12 6M0 22c9 0 8-4 12-4s3 4 12 4" s="#222" w={2} /></>,
  unsel: <><P d="M2 3l5 19 4-6 5 6 4-4-6-4 6-4z" f="#8a2038" s="#4a1020" /><P d="M13 1l9 9M22 1l-9 10" s="#e02020" w={2} /></>,
  mouse: <><P d="M2 3c10 0 2 18 10 18M8 3c-6 8 0 10-5 18M10 12C14 12 10 3 18 3" s="#e04a78" w={2} /><P d="M16 0l6 3-6 4z" f="#e04a78" /><R x={13} y={10} w={9} h={13} r={4} f="#fff" s="#a03050" /><R x={17} y={10} w={5} h={5} f="#d02850" /></>,
  scatter: <P d="M1 2h5M9 3l3 3 4-3M19 2h5M3 8l5 3M22 7l-5 4M9 12h2M14 12h3M3 16l6-3M22 16l-5-3M1 22h5M9 21l3-4 4 4M19 22h5" s="#e05a84" w={2} />,
  donut: <><C x={12} y={12} r={11} f="#f87aa0" s="#b8345c" /><P d="M7 13a5.500 5.500 0 1 1 5 5" s="#fff" w={2.4} /></>,
  palette: <><P d="M3 5c5-7 13-4 12 2 0 3 8 2 8 9 0 8-12 8-17 4S-1 11 3 5z" f="#dcdcdc" s="#222" w={1.5} /><C x={7} y={9} r={3} f="#9a1e48" s="#222" /><C x={9} y={17} r={3.2} f="#38b028" s="#222" /><C x={17} y={16} r={3.2} f="#2858b8" s="#222" /></>,
  sheet: <><P d="M1 2h8l2 3h12v18H1z" f="#3a9a20" s="#1c5a0c" /><P d="M4 9h16v11H4z" f="#6ac84a" /><P d="M8 9v11M12 9v11M16 9v11M4 13h16M4 16h16" s="#1c5a0c" /><P d="M13 1h10v3H13z" f="#c8ccc8" /></>,
  tubeShade: <><ellipse cx="12" cy="18" rx="10" ry="5" fill="#3a3c3e" /><g transform="translate(2 -2) scale(.75)"><Tube a="#f4f4f4" b="#c4c6c8" k="#888" /></g></>,
  tubeWire: <Tube a="#fff" b="#f4f4f4" />,
  tubeRed: <Tube a="#d83030" b="#a81010" k="#4a0808" />,
  tubeGreen: <><Tube a="#7ad03a" b="#c8d0c4" k="#2c4a14" /><P d="M3 4l19 18" s="#222" w={1.4} /></>,
  half: <><C x={12} y={12} r={10.5} f="#e4e6e8" s="#555" /><P d="M12 1.500a10.500 10.500 0 0 0 0 21z" f="#f08a28" s="#8a3a08" /></>,
  hex: <P d="M9 2l8 1 5 6-1 8-6 5-8-1-5-6 1-8z" f="#6aaef5" s="#1c4a90" w={1.4} />,
};

/* ---------- page shell ---------- */

const Page = styled.div`
  position: relative; display: flex; flex-direction: column; height: 100vh; overflow: hidden;
  background: #808487; line-height: 16px;
`;
const MenuBar = styled.nav`
  display: flex; gap: 15px; height: 15px; padding-left: 2px; background: #fdfefd; flex: none;
`;
const MenuButton = styled.button` color: #606264; line-height: 10px; height: 10px; white-space: nowrap; `;
const CommandArea = styled.section`
  display: flex; flex-direction: column; height: 73px; margin: 2px 1px 0 2px; flex: none; background: #bcbfbb;
`;
const History = styled.div`
  height: 53px; padding: 6px 0 0 1px; line-height: 23px; border-bottom: 1px solid #5c6063;
`;
const Prompt = styled.label` display: flex; height: 20px; line-height: 18px; padding-left: 1px; font-weight: 700; `;
const PromptInput = styled.input` flex: 1; `;
const PluginBar = styled.div`
  display: flex; align-items: center; height: 34px; margin-top: 7px; padding: 0 0 5px 2px; flex: none;
  background: linear-gradient(#c9ccce, #808487); border-bottom: 1px solid #6a6e71;
`;
const IconButton = styled.button<{ $w?: number; $h?: number }>`
  display: flex; align-items: center; justify-content: center; flex: none;
  width: ${(p) => p.$w ?? 28}px; height: ${(p) => p.$h ?? 28}px;
`;
const Divider = styled.i<{ $w: number; $h: number }>`
  flex: none; width: ${(p) => p.$w}px; height: ${(p) => p.$h}px;
  background: linear-gradient(90deg, #8a8d90 1px, #d4d6d7 1px 2px, transparent 2px) no-repeat center / 2px 100%;
`;

const TabRow = styled.div`
  display: flex; height: 32px; padding: 5px 0 0 1px; flex: none; overflow: hidden;
  background: linear-gradient(#84888b 5px, #909598 5px, #999ea0); border-bottom: 1px solid #5c6063;
`;
const ToolTab = styled.button<{ $on?: boolean }>`
  position: relative; flex: none; height: 27px; padding: 0 19px 2px; font-size: 13px; white-space: nowrap;
  border-top: 1px solid ${(p) => (p.$on ? '#d0d3d4' : '#6a6e71')};
  z-index: ${(p) => (p.$on ? 2 : 1)};
  span { position: relative; }
  &::before {
    content: ''; position: absolute; top: 0; left: -6px; width: 26px; height: 26px;
    border-left: 1px solid #656a6d; transform: skewX(-42deg);
  }
  ${(p) => p.$on && css`
    background: linear-gradient(#c4c8c9, #acb1b2); border-right: 1px solid #5c6063; border-radius: 0 4px 0 0;
    &::before { background: linear-gradient(#c4c8c9, #acb1b2); }
  `}
`;
const SelectBar = styled.div`
  display: flex; align-items: center; height: 40px; padding: 0 0 8px 2px; flex: none; overflow: hidden;
  background: linear-gradient(#a9adaf, #83878a);
`;
const Body = styled.div` flex: 1; display: flex; min-height: 0; `;
const SideBar = styled.aside` flex: none; width: 60px; padding-top: 2px; `;
const Grip = styled.div` width: 53px; height: 3px; border: solid #5f6366; border-width: 1px 0; `;
const SideGrid = styled.div`
  display: grid; grid-template-columns: 20px 28px; column-gap: 4px; grid-auto-rows: 28px; padding-top: 1px;
`;
const Center = styled.main` flex: 1; min-width: 0; display: flex; flex-direction: column; `;
const Viewport = styled.section`
  position: relative; flex: 1; min-height: 0; overflow: hidden; background: #9ba3a5; border: 1px solid #5c6063;
`;
const ViewTitle = styled.button`
  position: absolute; top: 0; left: 0; display: flex; align-items: center; height: 20px; padding: 0 2px 0 7px;
  background: #86a3c4; font-size: 13px; font-weight: 700;
  svg { margin-left: 8px; }
`;
const Drawing = styled.svg` position: absolute; left: -61px; top: -204px; `;
const ViewTabs = styled.div` display: flex; height: 24px; flex: none; gap: 2px; `;
const ViewTab = styled.button<{ $on?: boolean }>`
  height: 24px; padding: 0 5px 0 10px; font-size: 13px;
  background: ${(p) => (p.$on ? '#cdd0d1' : '#8e9396')};
  border-right: 1px solid #5c6063;
  clip-path: polygon(0 0, 100% 0, 100% 100%, 9px 100%, 0 55%);
  &:last-child { padding: 0 8px 0 12px; background: #858a8d; }
`;

/* ---------- properties panel ---------- */

const Panel = styled.aside`
  flex: none; width: 525px; margin: 35px 0 3px 9px; background: #f5f7f7; border: solid #5c6063; border-width: 1px 0 1px 1px;
`;
const Band = styled.div<{ $h: number; $bg: string; $line?: boolean }>`
  height: ${(p) => p.$h}px; background: ${(p) => p.$bg}; display: flex; justify-content: flex-end;
  border-bottom: ${(p) => (p.$line ? '1px solid #7c8082' : '0')};
`;
const Drop = styled.button`
  display: flex; align-items: center; justify-content: center; width: 24px; margin-right: -9px;
  background: #e0e3e3; border: 1px solid #999c9d;
`;
const PanelTitle = styled.h2` margin: 0; height: 31px; padding-left: 7px; font-size: 15px; line-height: 32px; font-weight: 400; `;
const PropTable = styled.table`
  width: calc(100% - 2px); margin-left: 2px; border-collapse: collapse; font-size: 13px; background: #fdfefe; table-layout: fixed;
  td, th { height: 25px; padding: 0; border: 1px solid #7c8082; font-weight: 400; text-align: left; border-right: 0; }
  th { width: 266px; padding-left: 22px; background: linear-gradient(90deg, #f5f7f7 19px, #fdfefe 19px); }
  td { padding-left: 2px; }
`;
const CellRow = styled.div` display: flex; align-items: center; justify-content: space-between; height: 24px; `;
const MoreButton = styled.button` width: 14px; height: 23px; padding-left: 6px; background: #e0e2e2; border: 1px solid #8a8d8f; text-align: left; overflow: hidden; `;

const Check = styled.input`
  appearance: none; position: relative; flex: none; display: block; width: 13px; height: 13px; background: #fff; border: 1px solid #222;
  &:disabled { background: #d5d8d8; border-color: #b4b8b9; }
  &:checked::after {
    content: ''; position: absolute; left: 3px; top: 0; width: 5px; height: 8px;
    border: solid #333; border-width: 0 1px 1px 0; transform: rotate(42deg);
  }
`;

/* ---------- bottom bars ---------- */

const SnapRow = styled.div`
  display: flex; align-items: center; gap: 7px; height: 28px; padding: 10px 0 0 4px; flex: none; font-size: 13px;
`;
const SnapItem = styled.label<{ $wide?: boolean }>`
  display: flex; align-items: center; gap: 3px; white-space: nowrap; margin-right: ${(p) => (p.$wide ? 13 : 0)}px;
`;
const StatusBar = styled.footer`
  display: flex; height: 19px; flex: none; border-top: 1px solid #5c6063; line-height: 18px; white-space: nowrap;
`;
const Cell = styled.button<{ $w?: number; $on?: boolean; $left?: boolean }>`
  flex: none; padding: 0 6px 0 7px; border-right: 1px solid #6a6e71;
  ${(p) => p.$w && css` width: ${p.$w}px; padding: 0; `}
  ${(p) => p.$on && css` background: #6686ee; font-weight: 700; `}
  ${(p) => p.$left && css` display: flex; align-items: center; gap: 2px; padding-left: 3px; `}
`;
const Swatch = styled.i` width: 14px; height: 14px; background: #000; `;
const Cpu = styled.span` padding-left: 1px; `;
const TaskBar = styled.div`
  height: 8px; flex: none; overflow: hidden; display: flex; background: #272828; color: #fff; padding-left: 308px;
`;
const Task = styled.i<{ $w: number; $bg: string; $gap: number }>`
  width: ${(p) => p.$w}px; height: 8px; background: ${(p) => p.$bg}; margin-right: ${(p) => p.$gap}px;
`;
const Clock = styled.time` margin-left: auto; padding: 3px 77px 0 0; `;

const Caption = styled.p<{ $mark?: boolean }>`
  position: absolute; z-index: 9; margin: 0; white-space: nowrap; paint-order: stroke fill; pointer-events: none;
  ${(p) => p.$mark
    ? css` right: 47px; bottom: 27px; font: 700 42px/48px "Noto Sans CJK SC", sans-serif; color: #8f928f; -webkit-text-stroke: 2px #f2f4f3; `
    : css` left: 1174px; bottom: 11px; font: 400 36px/48px "Noto Sans CJK JP", sans-serif; color: #fff; -webkit-text-stroke: 3px #2c2f3a; `}
`;

/* ---------- Grasshopper window ---------- */

const Window = styled.section`
  position: absolute; left: 837px; top: 34px; width: 980px; height: 725px; display: flex; flex-direction: column;
  background: #f0f1f1; border: 1px solid #55595c; box-shadow: 2px 4px 16px rgba(0, 0, 0, 0.5); z-index: 5;
`;
const TitleBar = styled.header`
  display: flex; align-items: center; height: 30px; padding-left: 8px; background: #fff; flex: none;
  h1 { margin: 0 auto 0 0; font-size: 12px; font-weight: 400; }
`;
const GhMenu = styled.nav`
  display: flex; align-items: center; height: 29px; padding: 0 12px 0 13px; gap: 21px; flex: none;
  background: linear-gradient(#f4f5f5, #fafbfb);
`;
const GhItem = styled.button<{ $end?: boolean }>` margin-left: ${(p) => (p.$end ? 'auto' : 0)}; white-space: nowrap; `;
const Reload = styled.button`
  position: relative; color: #10108c;
  svg { position: absolute; left: -7px; top: -1px; }
`;
const CatRow = styled.div`
  display: flex; gap: 1px; height: 23px; padding-left: 1px; flex: none; font: 10px/21px ${MONO}; color: #55585a; border-bottom: 1px solid #9a9d9d;
`;
const Cat = styled.button<{ $on?: boolean }>`
  min-width: 27px; height: 23px; padding: 0 8px;
  ${(p) => p.$on && css`
    color: #000; background: linear-gradient(#fff, #f0f0f0); border: 1px solid #9a9d9d; border-bottom: 0; border-radius: 6px 6px 0 0; padding: 0 7px 4px;
  `}
`;
const Ribbon = styled.div`
  display: flex; gap: 4px; height: 86px; padding: 2px 2px 0 3px; flex: none;
  background: linear-gradient(#d6d8d8, #f0f1f1 75px); border-bottom: 1px solid #777a7b;
`;
const Group = styled.section`
  display: flex; flex-direction: column; height: 73px; border: 1px solid #6e7172; border-radius: 5px; overflow: hidden;
  background: linear-gradient(#e9eaea, #d4d6d5);
`;
const GroupIcons = styled.div` display: flex; height: 58px; padding: 0 1px; align-items: flex-start; `;
const Cols = styled.div` display: grid; grid-auto-flow: column; grid-template-rows: 28px 28px; grid-auto-columns: 28px; `;
const GroupName = styled.h3`
  position: relative; margin: 0; height: 13px; padding-right: 10px; background: linear-gradient(#333536, #111); color: #f0f0f0; text-align: center;
  font: 10px/10px ${MONO};
  svg { position: absolute; right: 3px; top: 3px; }
`;
const CanvasBar = styled.div`
  display: flex; align-items: center; height: 35px; padding: 0 3px 0 1px; flex: none; background: linear-gradient(#fdfdfd, #f0f1f1);
`;
const ZoomBox = styled.label`
  position: relative; display: block; width: 136px; height: 26px;
  select { appearance: none; width: 100%; height: 100%; padding-left: 3px; background: #fff; border: 1px solid #777a7b; }
  svg { position: absolute; right: 4px; top: 10px; pointer-events: none; }
`;
const Caret = styled.i<{ $l?: number; $r?: number }>`
  width: 0; height: 0; border: solid transparent; border-width: 3px 3px 0; border-top-color: #111;
  margin: 0 ${(p) => p.$r ?? 5}px 0 ${(p) => p.$l ?? 3}px;
`;
const Framed = styled(IconButton)` border: 1px solid #2a6fb0; background: #f4f8fc; margin: 0 1px; `;
const Push = styled.span` margin-left: auto; `;
const Canvas = styled.div`
  position: relative; flex: 1; min-height: 0; margin: 0 2px 0 2px; overflow: hidden; background-color: #d2cfc4;
  background-image: linear-gradient(90deg, #b9b6ab 2px, transparent 2px), linear-gradient(#b9b6ab 2px, transparent 2px);
  background-size: 338px 100%, 100% 113px; background-position: 160px 0, 0 45px;
`;
const GroupBox = styled.div`
  position: absolute; left: 39px; top: 183px; width: 159px; height: 100px; background: #e9a49e; border: 1px solid #b0847c;
`;
const GroupLabel = styled.p`
  position: absolute; left: 2px; top: 146px; width: 236px; margin: 0; text-align: center; white-space: nowrap;
  font: italic 23px/24px "DejaVu Sans", sans-serif; color: #2c2a26;
`;
const Node = styled.div` position: absolute; left: 50px; top: 205px; `;
const MiniBar = styled.div`
  position: absolute; left: 0; bottom: 0; display: flex; align-items: center; height: 27px; padding: 0 5px 0 0;
  background: linear-gradient(#8d8f8f, #d4d5d5); border: 2px solid #111; border-left: 0; border-bottom-width: 1px;
`;
const Compass = styled.svg` position: absolute; right: 6px; bottom: 6px; `;
const GhStatus = styled.footer`
  position: relative; display: flex; justify-content: space-between; height: 24px; padding: 0 33px 0 7px; flex: none; line-height: 24px; border-top: 1px solid #fff;
  output { color: #707374; font: 12px/24px "Liberation Sans", Arial, sans-serif; }
  svg { position: absolute; right: 2px; bottom: 2px; }
`;

/* ---------- context menu ---------- */

const Menu = styled.div`
  position: absolute; left: 960px; top: 484px; z-index: 7; width: 275px; padding: 2px 1px 1px; border: 1px solid #86898a;
  background: linear-gradient(90deg, #f6f7f8, #eceded 24px, #fdfefd 24px); box-shadow: 4px 4px 3px rgba(0, 0, 0, 0.45);
`;
const NameRow = styled.div` display: flex; align-items: flex-start; height: 25px; padding-left: 31px; gap: 4px; `;
const NameInput = styled.input`
  width: 176px; height: 23px; padding: 2px 0 8px 2px; border: 1px solid #6a6d6e; color: #fff; font: 10px/11px ${MONO};
  background: linear-gradient(#0a6fd0, #0a6fd0) 2px 2px / 36px 12px no-repeat #fff;
`;
const BrushButton = styled(IconButton)` margin-top: 1px; `;
const MenuItem = styled.button`
  display: grid; grid-template-columns: 20px 1fr 12px; column-gap: 14px; align-items: center; width: 100%; height: 22px; text-align: left;
  > span:first-child { display: flex; justify-content: center; align-items: center; width: 20px; height: 20px; margin-left: 1px; }
`;
const ActiveMark = styled.span` background: #b4d4f4; box-shadow: inset 0 0 0 1px #2a78c8; `;
const Line = styled.hr` margin: 3px 0 2px 31px; height: 1px; border: 0; background: #b4b7b7; `;

const Cursor = styled.div` position: absolute; left: 773px; top: 501px; z-index: 4; `;

/* ---------- viewport content ---------- */

type DashRow = { c: string; y: number; y2: number; xs: number[]; cy: number[] };
const r = (c: string, y: number, y2: number, xs: number[], cy: number[] = []): DashRow => ({ c, y, y2, xs, cy });
const RD = '#d21f26', MG = '#d724dc', CY = '#22dede';
const dashRows: DashRow[] = [
  r(RD, 241, 237, [152, 183, 225, 267, 302, 342, 385, 427, 463, 503, 545, 583]),
  r(RD, 252, 249, [153, 188, 219, 251, 282, 313, 349, 379, 412, 442, 473, 510, 538, 571, 601]),
  r(RD, 268, 263, [159, 200, 241, 280, 320, 360, 401, 440, 480, 521, 562, 602]),
  r(RD, 285, 281, [140, 171, 200, 236, 264, 301, 331, 361, 397, 429, 461, 492, 521, 558, 589, 623]),
  r(MG, 299, 295, [144, 178, 217, 259, 297, 338, 378, 420, 457, 499, 539, 580, 616]),
  r(MG, 311, 308, [142, 171, 203, 236, 268, 299, 331, 363, 399, 428, 458, 492, 527, 558, 589, 624]),
  r(MG, 323, 320, [155, 191, 231, 269, 309, 351, 392, 430, 472, 512, 552, 592, 631]),
  r(CY, 337, 333, [143, 168, 199, 232, 264, 297, 328, 360, 393, 426, 457, 489, 520, 556, 587, 619, 652]),
  r(CY, 349, 345, [166, 207, 242, 286, 321, 368, 402, 448, 484, 528, 566, 607, 648]),
  r(CY, 365, 361, [153, 187, 217, 315, 348, 382, 410, 443, 476, 510, 540, 571, 602], [256, 288, 614, 640, 670]),
  r(CY, 384, 379, [149, 183, 223, 344, 383, 426, 465, 503, 544, 587], [269, 297, 632, 672]),
  r(CY, 402, 395, [141, 175, 203, 236, 333, 365, 397, 431, 464, 495, 527, 558, 592, 624], [277, 305, 661, 689]),
  r(RD, 417, 413, [161, 203, 246, 288, 323, 364, 408, 449, 484, 526, 568, 611, 647, 688]),
  r(RD, 430, 425, [142, 173, 278, 304, 335, 371, 402, 434, 464, 496, 532, 562, 595, 694], [208, 241, 267, 607, 627, 660]),
  r(RD, 446, 441, [142, 179, 301, 341, 382, 424, 463, 503, 544, 585, 704], [223, 263, 626, 663]),
  r(RD, 463, 458, [153, 191, 286, 323, 353, 382, 419, 452, 484, 515, 544, 581, 614, 716], [230, 262, 288, 626, 648, 679]),
  r(MG, 477, 473, [160, 198, 237, 280, 318, 360, 401, 441, 481, 523, 561, 603, 643, 683, 721]),
  r(MG, 490, 484, [158, 192, 225, 258, 288, 320, 353, 385, 420, 452, 482, 515, 549, 582, 613, 645, 678, 712, 743]),
  r(MG, 502, 497, [161, 211, 252, 291, 333, 372, 414, 453, 493, 534, 576, 616, 656, 697, 739]),
  r(CY, 516, 509, [153, 189, 223, 256, 287, 319, 353, 386, 416, 448, 480, 512, 547, 578, 612, 644, 677, 708, 748]),
  r(CY, 528, 523, [152, 183, 228, 264, 306, 346, 390, 425, 469, 508, 552, 591, 631, 672, 713, 753]),
  r(CY, 544, 538, [144, 176, 207, 240, 304, 336, 369, 400, 432, 466, 497, 532, 563, 593, 625, 695, 727, 766], [273, 639, 665, 696]),
  r(CY, 563, 557, [153, 202, 242, 332, 367, 405, 448, 489, 528, 568, 612, 730, 776], [287, 320, 656, 692]),
  r(CY, 580, 574, [156, 192, 224, 257, 352, 384, 417, 453, 488, 518, 550, 583, 616, 648, 715, 744, 784], [296, 328, 658, 687]),
  r(RD, 597, 591, [152, 182, 224, 267, 311, 345, 382, 426, 468, 504, 545, 588, 632, 667, 712, 756, 799, 834]),
  r(RD, 610, 604, [154, 189, 295, 321, 353, 388, 419, 452, 483, 515, 552, 583, 615, 718, 749, 782, 814], [232, 288, 632, 652, 685]),
  r(RD, 626, 620, [156, 196, 319, 359, 401, 441, 482, 522, 563, 604, 731, 772, 812], [242, 282, 655, 688]),
  r(RD, 643, 637, [151, 177, 208, 310, 340, 371, 407, 438, 471, 503, 534, 570, 601, 636, 731, 768, 801, 834], [253, 281, 308, 653, 673, 704]),
  r(MG, 658, 652, [142, 177, 219, 260, 303, 340, 382, 423, 464, 504, 546, 587, 628, 667, 708, 752, 792, 832]),
  r(MG, 670, 665, [143, 179, 212, 246, 281, 312, 343, 377, 409, 443, 474, 506, 539, 573, 607, 639, 669, 702, 737, 769, 800, 833]),
  r(MG, 683, 678, [147, 192, 232, 273, 315, 353, 396, 436, 476, 515, 559, 600, 640, 680, 722, 763, 803]),
  r(CY, 697, 692, [148, 179, 212, 247, 278, 312, 343, 375, 409, 439, 474, 507, 540, 576, 602, 639, 670, 702, 736, 769, 801, 833]),
  r(CY, 712, 707, [153, 208, 248, 288, 332, 362, 415, 448, 495, 535, 576, 613, 657, 697, 738, 776, 823]),
];

const Dashes = () => (
  <>
    {dashRows.map((row, i) => {
      const a = row.xs[0], b = row.xs[row.xs.length - 1];
      const at = (x: number) => Math.round(row.y + ((row.y2 - row.y) * (x - a)) / (b - a)) + 0.5;
      const solid = row.c === CY;
      return (
        <g key={i} fill="none">
          <path d={row.xs.map((x) => `M${x} ${at(x)}h${solid ? 20 : 11}`).join('')} stroke={row.c} opacity=".75" />
          <path d={row.xs.map((x) => `M${x + 12} ${at(x) - (solid ? 1 : 0)}h8`).join('')} stroke={row.c} />
          <path d={row.cy.map((x) => `M${x} ${at(x)}h12`).join('')} stroke={CY} strokeWidth="1.500" />
        </g>
      );
    })}
  </>
);

const ArrowCursor = () => (
  <svg width="14" height="20" viewBox="0 0 14 20" aria-hidden="true"><path d="M1 1v16l4-4 2.500 6 3-1.500-2.500-5.500h5z" fill="#fff" stroke="#111" /></svg>
);

/* ---------- data ---------- */

const menus = ['文件(F)', '编辑(E)', '查看(V)', '曲线(C)', '曲面(S)', '实体(O)', '网格(M)', '尺寸标注(D)', '变动(T)', '工具(L)', '分析(A)', '渲染(R)', '面板(P)', 'SectionTools', '说明(H)'];
const toolTabs = ['标准', '工作平面', '设置视图', '显示', '选取', '工作视窗配置', '可见性', '变动', '曲线工具', '曲面工具', '实体工具'];
const cats = 'Prm Math Set Vec Crv Srf Msh Int Trns Dis Z W p H C A D E E H I K K L M P p P S S V W'.split(' ');
const snaps: [string, boolean, boolean?][] = [['端点', true], ['最近点', true], ['点', true], ['中点', true], ['中心点', false], ['交点', true], ['垂点', true], ['切点', false], ['四分点', false], ['节点', false], ['顶点', true], ['投影', false, true], ['停用', false, true]];
const modes: [string, boolean][] = [['锁定格点', false], ['正交', true], ['平面模式', false], ['物件锁点', true], ['智慧轨迹', false], ['操作轴', true], ['记录建构历史', false], ['过滤器', false]];
const W = '#fdfefe', F5 = '#f5f7f7', DK = '#808487', E0 = '#dfe1e0';
const bands: [number, string, boolean][] = [[35, F5, true], [31, F5, true], [24, W, false], [51, DK, false], [24, W, true], [31, F5, true], [25, W, true], [25, W, true], [25, W, true], [25, W, true], [25, W, false], [27, DK, true], [23, E0, true], [31, F5, true], [25, W, true], [25, W, true], [25, W, true], [25, E0, true]];

const tileIcon = (d: string) => (<Svg size={15}><R x={1} y={1} w={13} h={13} r={2} f="#e2e4e4" s="#333" /><P d={d} s="#333" w={1.6} /></Svg>);
const menuItems: ({ t: string; icon?: React.ReactNode; on?: boolean; sub?: boolean } | null)[] = [
  { t: 'Preview', on: true, icon: <Svg size={15}><P d="M3 1l6-1 5 2v10l-5 3-2-2-5 1-2-4 1-5z" f="#a8acaf" s="#6a6e70" /><P d="M3 2l5-1 4 2-5 2-4 2z" f="#dcdfe0" /></Svg> },
  { t: 'Enabled', icon: <Svg size={15}><R x={1} y={1} w={13} h={13} f="#a0a3a4" s="#666" /><R x={5} y={2} w={5} h={11} f="#333" /><R x={5} y={2} w={5} h={4} f="#777" /></Svg> },
  { t: 'Bake...', icon: <Svg size={15}><P d="M1 6c1-2 4-1 6-4s6-1 6 1 2 4 1 6-5 5-9 5-5-5-4-8z" f="#f2f0ec" s="#a09a90" /><C x={8} y={8} r={3} f="#f5982a" s="#d07010" /></Svg> },
  { t: 'Wire Display', sub: true },
  { t: 'Reverse', icon: tileIcon('M4 5h5a2.500 2.500 0 0 1 0 5H6M6 3L4 5l2 2') },
  { t: 'Flatten', icon: tileIcon('M7.500 3v8M4 8l3.500 3.500L11 8') },
  { t: 'Graft', icon: tileIcon('M7.500 12V4M4 7l3.500-3.500L11 7') },
  { t: 'Simplify', icon: tileIcon('M3 3l4.500 4.500L12 3M7.500 7.500V12') },
  null,
  { t: 'Set one Extended Geometry' },
  { t: 'Set Multiple Extended Geometries' },
  null,
  { t: 'Clear values' },
  { t: 'Extract parameter' },
  null,
  { t: 'Help...', icon: <Svg size={16}><C x={8} y={8} r={7.5} f="#4a68c8" s="#24357e" /><T x={5} y={12} z={12} f="#fff" b>?</T></Svg> },
];

const Tool = ({ icon, w = 30, label }: { icon: React.ReactNode; w?: number; label: string }) => (
  <IconButton $w={w} $h={30} aria-label={label}><Svg size={22} box={24}>{icon}</Svg></IconButton>
);

const GeometryNode = () => (
  <svg width="138" height="58" viewBox="0 0 138 58" aria-hidden="true">
    <defs>
      <linearGradient id="cap" x1="0" y1="0" x2="0" y2="1"><stop offset="0" stopColor="#f4f5f5" /><stop offset=".5" stopColor="#d8dada" /><stop offset="1" stopColor="#a4a6a6" /></linearGradient>
    </defs>
    <path d="M12 19a9 9 0 0 0 0 18z" fill="#fff" stroke="#111" strokeWidth="4" />
    <path d="M125 19a9 9 0 0 1 0 18z" fill="#fff" stroke="#111" strokeWidth="4" />
    <rect x="12" y="1" width="113" height="55" rx="7" fill="url(#cap)" stroke="#3a3c3c" strokeWidth="2.500" />
    <path d="M54 5h28l12 24-12 23H54L42 29z" fill="#2c2e2e" stroke="#111" strokeWidth="2" />
    <circle cx="68" cy="29" r="19" fill="#e4e6e6" />
    <path d="M67 30c0-3 4-2 4 1s-6 5-8 1 2-10 7-9 8 8 4 12-13 3-15-4 4-14 12-13 12 11 7 17-16 5-19-2-2-15 6-18" fill="none" stroke="#555" strokeWidth="2.200" />
    <circle cx="68" cy="29" r="18" fill="none" stroke="#888" strokeWidth="1.500" />
  </svg>
);

export default function App() {
  return (
    <Page>
      <Global />
      <MenuBar>{menus.map((m) => <MenuButton key={m}>{m}</MenuButton>)}</MenuBar>
      <CommandArea>
        <History><div>Select Any Objects</div><div>Select Any Objects，按 Enter 完成</div></History>
        <Prompt>指令:<PromptInput aria-label="指令" /></Prompt>
      </CommandArea>
      <PluginBar>
        {pluginIcons.map((n, i) => (n === '|' ? <Divider key={i} $w={6} $h={24} /> : <IconButton key={i} aria-label={`plugin ${i}`}><Svg size={22}>{n}</Svg></IconButton>))}
      </PluginBar>
      <TabRow>{toolTabs.map((t) => <ToolTab key={t} $on={t === '选取'}><span>{t}</span></ToolTab>)}</TabRow>
      <SelectBar>
        {selectIcons.map((n, i) => (n === '|' ? <Divider key={i} $w={6} $h={26} /> : (
          <IconButton key={i} aria-label={`select ${i}`}>
            <Svg size={22}>{n}<P d="M18 .5h3.500v3.500M.5 18v3.500h3.500" s="#111" />{flyouts.has(i) && <P d="M23 17v6h-6z" f="#4a4d50" />}</Svg>
          </IconButton>
        )))}
      </SelectBar>
      <Body>
        <SideBar>
          <Grip />
          <SideGrid>
            {sideIcons.map((n, i) => (
              <IconButton key={i} $w={i % 2 ? 28 : 20} aria-label={`tool ${i}`}>
                <Svg size={22}>{n}{!noFlyout.has(i) && <P d="M24 19v6h-6z" f="#3c3f42" />}</Svg>
              </IconButton>
            ))}
          </SideGrid>
        </SideBar>
        <Center>
          <Viewport>
            <Drawing width="1400" height="960" aria-hidden="true">
              <Dashes />
              <g stroke="#6c7376" fill="none"><path d="M96.500 874v30M96 903.500h30" /></g>
              <g fill="#6c7376" fontSize="14" fontFamily="Noto Sans, sans-serif"><text x="98" y="874">y</text><text x="98" y="904">z</text><text x="128" y="905">x</text></g>
            </Drawing>
            <ViewTitle>Perspective<svg width="13" height="17" viewBox="0 0 13 17" aria-hidden="true"><path d="M.5 0v17" stroke="#111" /><path d="M2 7h7L5.500 10.500z" fill="#111" /></svg></ViewTitle>
          </Viewport>
          <ViewTabs>
            {['Perspective', 'Top', 'Front', 'Right'].map((t) => <ViewTab key={t} $on={t === 'Perspective'}>{t}</ViewTab>)}
            <ViewTab aria-label="new viewport"><svg width="10" height="10" viewBox="0 0 10 10"><path d="M3.500.5h3v3h3v3h-3v3h-3v-3h-3v-3h3z" fill="none" stroke="#4a4d50" /></svg></ViewTab>
          </ViewTabs>
        </Center>
        <Panel>
          {bands.map(([h, bg, line], i) => (
            <Band key={i} $h={h} $bg={bg} $line={line}>
              {i === 4 && <Drop aria-label="open list"><svg width="8" height="5" viewBox="0 0 8 5"><path d="M0 0l4 4 4-4" fill="none" stroke="#333" /></svg></Drop>}
            </Band>
          ))}
          <PanelTitle>底色图案</PanelTitle>
          <PropTable>
            <tbody>
              <tr><th scope="row">文件名称</th><td><CellRow>(无)<MoreButton>...</MoreButton></CellRow></td></tr>
              <tr><th scope="row">显示</th><td><Check type="checkbox" aria-label="显示" defaultChecked /></td></tr>
              <tr><th scope="row">灰阶</th><td><Check type="checkbox" aria-label="灰阶" defaultChecked /></td></tr>
            </tbody>
          </PropTable>
        </Panel>
      </Body>
      <SnapRow>
        {snaps.map(([t, on, off]) => <SnapItem key={t} $wide={t === '投影'}><Check type="checkbox" defaultChecked={on} disabled={off} />{t}</SnapItem>)}
      </SnapRow>
      <StatusBar>
        <Cell $w={56} $on>世界</Cell>
        <Cell $w={88}>x 2265798.743</Cell>
        <Cell $w={88}>y 499346.144</Cell>
        <Cell $w={88}>z 0.000</Cell>
        <Cell $w={88}>毫米</Cell>
        <Cell $w={168} $left><Swatch />默认值</Cell>
        {modes.map(([t, on]) => <Cell key={t} $on={on}>{t}</Cell>)}
        <Cpu>CPU 使用量: 1.5 %</Cpu>
      </StatusBar>
      <TaskBar><Task $w={48} $bg="#b0642a" $gap={197} /><Task $w={45} $bg="#4a4c4c" $gap={0} /><Task $w={3} $bg="#5c5e5e" $gap={0} /><Clock>10:51</Clock></TaskBar>

      <Cursor><ArrowCursor /></Cursor>

      <Window>
        <TitleBar>
          <h1>Grasshopper - unnamed</h1>
          <IconButton $w={46} aria-label="minimize"><Svg size={11}><P d="M0 5.500h11" s="#111" /></Svg></IconButton>
          <IconButton $w={46} aria-label="maximize"><Svg size={11}><P d="M.5.5h10v10H.5z" s="#111" /></Svg></IconButton>
          <IconButton $w={46} aria-label="close"><Svg size={11}><P d="M0 0l11 11M11 0L0 11" s="#111" /></Svg></IconButton>
        </TitleBar>
        <GhMenu>
          {['File', 'Edit', 'View', 'Display', 'Solution', 'Help', 'Pancake'].map((m) => <GhItem key={m}>{m}</GhItem>)}
          <Reload>Reload
            <svg width="54" height="19" viewBox="0 0 54 19" aria-hidden="true"><path d="M3 6v9q0 3 3 3h42" fill="none" stroke="#1c8a24" strokeWidth="1.500" /><path d="M0 7l3-5 3 5z" fill="#1c8a24" /><path d="M8 1h42q2 0 2 3v7" fill="none" stroke="#d02a2a" strokeWidth="1.500" /><path d="M49 10l3 5 3-5z" fill="#d02a2a" /></svg>
          </Reload>
          <GhItem>SnappingGecko</GhItem><GhItem>MetaHopper</GhItem><GhItem $end>unnamed</GhItem>
        </GhMenu>
        <CatRow>{cats.map((c, i) => <Cat key={i} $on={c === 'Set'}>{c}</Cat>)}</CatRow>
        <Ribbon>
          {ribbon.map((g) => (
            <Group key={g.name}>
              <GroupIcons>
                {g.sections.map((sec, i) => (
                  <React.Fragment key={i}>
                    {i > 0 && <Divider $w={10} $h={54} />}
                    <Cols>
                      {sec.flatMap(([a, b], j) => [a, b].map((n, k) => (n ? <IconButton key={`${j}${k}`} aria-label={`${g.name} ${i}${j}${k}`}><Svg size={20} box={24}>{n}</Svg></IconButton> : <span key={`${j}${k}`} />)))}
                    </Cols>
                  </React.Fragment>
                ))}
              </GroupIcons>
              <GroupName>{g.name}<svg width="7" height="8" viewBox="0 0 7 8"><path d="M3.500 0v8M0 4h7" stroke="#c4c6c6" strokeWidth="1.500" /></svg></GroupName>
            </Group>
          ))}
        </Ribbon>
        <CanvasBar>
          <Tool icon={ic.open} label="open" /><Tool icon={ic.save} label="save" />
          <Divider $w={10} $h={24} />
          <ZoomBox>
            <select aria-label="zoom" defaultValue="225%"><option>225%</option></select>
            <svg width="9" height="6" viewBox="0 0 9 6"><path d="M.5.5l4 4 4-4" fill="none" stroke="#444" /></svg>
          </ZoomBox>
          <Tool icon={ic.zoom} label="zoom extents" w={32} /><Caret />
          <Tool icon={ic.eye} label="views" w={28} /><Caret />
          <Tool icon={ic.pen} label="sketch" w={26} />
          <Divider $w={10} $h={24} />
          <Tool icon={ic.finder} label="finder" w={28} /><Tool icon={ic.gha} label="assemblies" /><Tool icon={ic.win} label="window" /><Tool icon={ic.weave} label="wires" />
          <Divider $w={6} $h={24} />
          <Tool icon={ic.unsel} label="deselect" /><Tool icon={ic.mouse} label="mouse" /><Tool icon={ic.scatter} label="scatter" />
          <Divider $w={6} $h={24} />
          <Tool icon={ic.donut} label="donut" /><Tool icon={ic.palette} label="palette" w={29} />
          <Framed $w={30} $h={31} aria-label="sheet"><Svg size={21} box={24}>{ic.sheet}</Svg></Framed>
          <Push />
          <Tool icon={ic.tubeShade} label="no preview" /><Tool icon={ic.tubeWire} label="wire preview" w={29} />
          <Framed $w={28} $h={31} aria-label="shaded preview"><Svg size={22} box={24}>{ic.tubeRed}</Svg></Framed>
          <Divider $w={14} $h={24} />
          <Tool icon={ic.tubeGreen} label="selected preview" w={29} /><Tool icon={ic.half} label="document preview" w={28} />
          <Divider $w={6} $h={24} />
          <Tool icon={ic.hex} label="mesh quality" w={27} /><Caret $l={0} $r={3} />
        </CanvasBar>
        <Canvas>
          <GroupBox />
          <GroupLabel>Group<br />Extended Geometry</GroupLabel>
          <Node><GeometryNode /></Node>
          <MiniBar>
            <IconButton $h={24} aria-label="text"><Svg size={24}><P d="M1 9l2-6 2 3 2-5 3 4 3-4 2 4 3-3 1 4 3-1-1 9c1 8-8 9-12 8S1 17 1 9z" f="#f5641e" s="#7a2408" /><T x={2} y={15} z={8} b>TEXT</T></Svg></IconButton>
            <IconButton $h={24} aria-label="paint"><Svg size={24}><R x={1} y={1} w={22} h={22} r={3} f="#c0c2c2" s="#222" /><P d="M1 4c0-2 1-3 3-3h16c2 0 3 1 3 3v5c-2 2-4-1-6 1s0 4-1 7c-1 5-5 4-5 0s1-6-2-7-5 2-8-1z" f="#ff9a1e" /></Svg></IconButton>
            <IconButton $h={24} aria-label="geometry"><Svg size={24}><P d="M6 2h12l6 10-6 10H6L0 12z" f="#222" s="#111" /><g transform="rotate(-40 12 12)" fill="none" stroke="#eee"><ellipse cx="12" cy="12" rx="8" ry="5" /><ellipse cx="12" cy="12" rx="4.500" ry="2.500" /></g></Svg></IconButton>
          </MiniBar>
          <Compass width="46" height="54" viewBox="0 0 46 54" aria-hidden="true">
            <defs><radialGradient id="dial"><stop offset="0" stopColor="#f2f2f2" /><stop offset="1" stopColor="#b0b2b2" /></radialGradient></defs>
            <path d="M4 27A20 20 0 0 1 43 27" fill="none" stroke="#111" strokeWidth="5" strokeDasharray="4 8 22 4 12" />
            <path d="M13 1l6 4-3 5 6 2-7 2-5-5z" fill="#111" />
            <circle cx="23" cy="32" r="20" fill="url(#dial)" stroke="#333" />
            <circle cx="23" cy="32" r="18.500" fill="none" stroke="#fff" strokeWidth="1.500" />
            <path d="M17 14l6 0-2 5zM41 25l0 6-5-2zM5 34l5 1-4 4zM25 50l3-5 2 5z" fill="#fff" />
          </Compass>
        </Canvas>
        <GhStatus><span>...</span><output>1.0.0007</output>
          <svg width="10" height="10" viewBox="0 0 10 10" fill="#9a9d9e"><path d="M8 0h2v2H8zM8 4h2v2H8zM8 8h2v2H8zM4 4h2v2H4zM4 8h2v2H4zM0 8h2v2H0z" /></svg>
        </GhStatus>
      </Window>

      <Menu role="menu">
        <NameRow>
          <NameInput aria-label="name" defaultValue="ExtGeo" />
          <BrushButton $w={15} $h={20} aria-label="colour">
            <Svg size={15}><P d="M1 9l5-6 5 4-4 7-5-2z" f="#e8eaea" s="#222" /><P d="M6 3c0-3 3-3 3 0v4M3 9h7" s="#222" /><P d="M9 6c4-1 6 1 5 7" s="#d03a2a" w={2.4} /></Svg>
          </BrushButton>
        </NameRow>
        {menuItems.map((m, i) => (m === null ? <Line key={i} /> : (
          <MenuItem key={m.t} role="menuitem">
            {m.on ? <ActiveMark>{m.icon}</ActiveMark> : <span>{m.icon}</span>}
            <span>{m.t}</span>
            {m.sub ? <svg width="4" height="8" viewBox="0 0 4 8"><path d="M0 0l4 4-4 4z" fill="#111" /></svg> : <span />}
          </MenuItem>
        )))}
      </Menu>

      <Caption>愛した幻に口づけを</Caption>
      <Caption $mark>笑里追风</Caption>
    </Page>
  );
}
